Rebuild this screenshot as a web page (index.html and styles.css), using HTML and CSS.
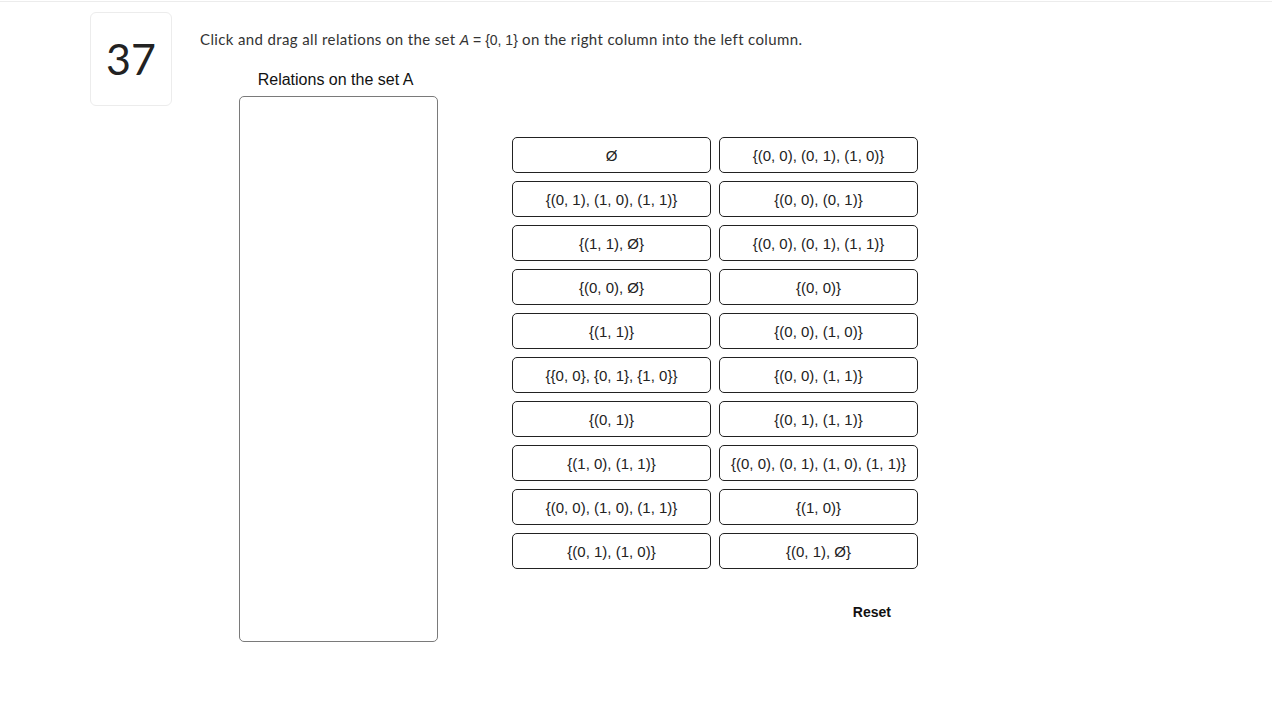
FILE: index.html
```html
<!DOCTYPE html>
<html>
<head>
<meta charset="utf-8">
<link rel="stylesheet" href="styles.css">
</head>
<body>
<div class="topline"></div>
<div class="page">
  <div class="qnum">37</div>
  <div class="content">
    <p class="prompt">Click and drag all relations on the set <span class="math"><i>A</i> = {0, 1}</span> on the right column into the left column.</p>
    <div class="work">
      <div class="target">
        <div class="target-label">Relations on the set A</div>
        <div class="dropbox"></div>
      </div>
      <div class="source">
        <div class="tiles">
          <div class="tile">Ø</div>
          <div class="tile">{(0, 0), (0, 1), (1, 0)}</div>
          <div class="tile">{(0, 1), (1, 0), (1, 1)}</div>
          <div class="tile">{(0, 0), (0, 1)}</div>
          <div class="tile">{(1, 1), Ø}</div>
          <div class="tile">{(0, 0), (0, 1), (1, 1)}</div>
          <div class="tile">{(0, 0), Ø}</div>
          <div class="tile">{(0, 0)}</div>
          <div class="tile">{(1, 1)}</div>
          <div class="tile">{(0, 0), (1, 0)}</div>
          <div class="tile">{{0, 0}, {0, 1}, {1, 0}}</div>
          <div class="tile">{(0, 0), (1, 1)}</div>
          <div class="tile">{(0, 1)}</div>
          <div class="tile">{(0, 1), (1, 1)}</div>
          <div class="tile">{(1, 0), (1, 1)}</div>
          <div class="tile">{(0, 0), (0, 1), (1, 0), (1, 1)}</div>
          <div class="tile">{(0, 0), (1, 0), (1, 1)}</div>
          <div class="tile">{(1, 0)}</div>
          <div class="tile">{(0, 1), (1, 0)}</div>
          <div class="tile">{(0, 1), Ø}</div>
        </div>
        <div class="actions"><span class="reset">Reset</span></div>
      </div>
    </div>
  </div>
</div>
</body>
</html>
```
FILE: styles.css
```css
html, body {
  margin: 0;
  padding: 0;
  background: #fff;
}
body {
  padding-top: 1px;
}
.topline {
  height: 1px;
  background: #ececec;
}
.page {
  display: flex;
  padding: 10px 0 0 90px;
}
.qnum {
  box-sizing: border-box;
  width: 82px;
  height: 94px;
  border: 1px solid #ececec;
  border-radius: 6px;
  display: flex;
  align-items: center;
  justify-content: center;
  font-family: "Lato", "Open Sans", sans-serif;
  font-size: 43px;
  color: #222;
  padding-bottom: 2px;
}
.content {
  margin-left: 28px;
}
.prompt {
  margin: 18px 0 0 0;
  font-family: "Lato", sans-serif;
  font-size: 15px;
  line-height: 18px;
  letter-spacing: 0.37px;
  color: #333;
}
.math {
  font-family: "Liberation Sans", Arial, sans-serif;
  font-size: 14px;
  letter-spacing: 0;
}
.work {
  display: flex;
  margin-top: 22px;
}
.target {
  margin-left: 39px;
  width: 199px;
}
.target-label {
  font-family: "Liberation Sans", Arial, sans-serif;
  font-size: 16px;
  line-height: 18px;
  color: #111;
  text-align: center;
  padding-right: 6px;
}
.dropbox {
  box-sizing: border-box;
  margin-top: 7px;
  height: 546px;
  border: 1px solid #7a7a7a;
  border-radius: 5px;
}
.source {
  margin-left: 74px;
  padding-top: 66px;
}
.tiles {
  display: grid;
  grid-template-columns: 199px 199px;
  grid-auto-rows: 36px;
  column-gap: 8px;
  row-gap: 8px;
}
.tile {
  box-sizing: border-box;
  border: 1px solid #222;
  border-radius: 5px;
  display: flex;
  align-items: center;
  justify-content: center;
  font-family: "Liberation Sans", Arial, sans-serif;
  font-size: 15px;
  color: #222;
}
.actions {
  display: flex;
  justify-content: flex-end;
  padding-right: 27px;
  margin-top: 35px;
}
.reset {
  font-family: "Liberation Sans", Arial, sans-serif;
  font-weight: bold;
  font-size: 14px;
  color: #111;
}
```
